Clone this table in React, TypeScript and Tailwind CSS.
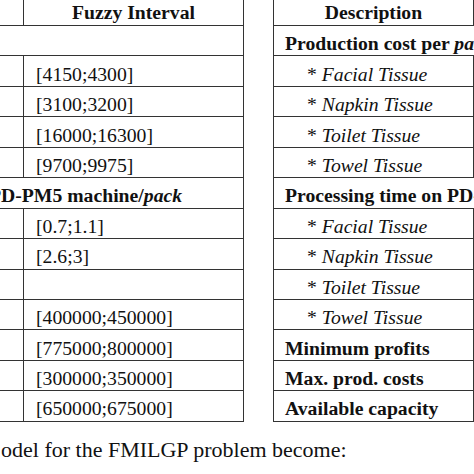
import React from 'react'

type Row =
  | { kind: 'head'; desc: string; value: string }
  | { kind: 'group'; text: string; italicTail: string }
  | { kind: 'item'; desc: string; value: string; plain?: boolean }

const leftRows: Row[] = [
  { kind: 'head', desc: 'Description', value: 'Fuzzy Interval' },
  { kind: 'group', text: 'Sales price per ', italicTail: 'pack' },
  { kind: 'item', desc: 'Facial Tissue', value: '[4150;4300]' },
  { kind: 'item', desc: 'Napkin Tissue', value: '[3100;3200]' },
  { kind: 'item', desc: 'Toilet Tissue', value: '[16000;16300]' },
  { kind: 'item', desc: 'Towel Tissue', value: '[9700;9975]' },
  { kind: 'group', text: 'Processing time on PD-PM5 machine/', italicTail: 'pack' },
  { kind: 'item', desc: 'Facial Tissue', value: '[0.7;1.1]' },
  { kind: 'item', desc: 'Napkin Tissue', value: '[2.6;3]' },
  { kind: 'item', desc: 'Toilet Tissue', value: '' },
  { kind: 'item', desc: 'Towel Tissue', value: '[400000;450000]' },
  { kind: 'item', desc: 'Minimum profits', value: '[775000;800000]', plain: true },
  { kind: 'item', desc: 'Max. prod. costs', value: '[300000;350000]', plain: true },
  { kind: 'item', desc: 'Available capacity', value: '[650000;675000]', plain: true },
]

const rightRows: Row[] = [
  { kind: 'head', desc: 'Description', value: 'Fuzzy Interval' },
  { kind: 'group', text: 'Production cost per ', italicTail: 'pack' },
  { kind: 'item', desc: 'Facial Tissue', value: '[2100;2200]' },
  { kind: 'item', desc: 'Napkin Tissue', value: '[1500;1600]' },
  { kind: 'item', desc: 'Toilet Tissue', value: '[8000;8200]' },
  { kind: 'item', desc: 'Towel Tissue', value: '[4800;4900]' },
  { kind: 'group', text: 'Processing time on PD-PM5 machine/', italicTail: 'pack' },
  { kind: 'item', desc: 'Facial Tissue', value: '[0.5;0.7]' },
  { kind: 'item', desc: 'Napkin Tissue', value: '[0.4;0.6]' },
  { kind: 'item', desc: 'Toilet Tissue', value: '[2.5;2.8]' },
  { kind: 'item', desc: 'Towel Tissue', value: '[1.2;1.5]' },
  { kind: 'item', desc: 'Minimum profits', value: '', plain: true },
  { kind: 'item', desc: 'Max. prod. costs', value: '', plain: true },
  { kind: 'item', desc: 'Available capacity', value: '', plain: true },
]

function TableRow({ row, descWidth }: { row: Row; descWidth: string }) {
  if (row.kind === 'group') {
    return (
      <div className="flex h-[30.45px] items-end border-b border-[#333] pb-[1.5px] pl-[11px] font-bold whitespace-nowrap">
        <span>
          {row.text}
          <i>{row.italicTail}</i>
        </span>
      </div>
    )
  }

  if (row.kind === 'head') {
    return (
      <div className="flex h-[31px] border-b border-[#333] font-bold">
        <div className={`${descWidth} flex shrink-0 items-end justify-center border-r border-[#333] pb-[2px]`}>
          {row.desc}
        </div>
        <div className="flex flex-1 items-end justify-center pb-[2px] whitespace-nowrap">{row.value}</div>
      </div>
    )
  }

  return (
    <div className="flex h-[30.45px] border-b border-[#333]">
      <div
        className={`${descWidth} flex shrink-0 items-end border-r border-[#333] pb-[1.5px] whitespace-nowrap ${
          row.plain ? 'pl-[11px] font-bold' : 'pl-[33px]'
        }`}
      >
        {row.plain ? row.desc : (
          <span>
            * <i>{row.desc}</i>
          </span>
        )}
      </div>
      <div className="flex flex-1 items-end pb-[1.5px] pl-[12px] whitespace-nowrap">{row.value}</div>
    </div>
  )
}

export default function App() {
  return (
    <div className="h-[474px] w-[474px] overflow-hidden bg-white font-['Liberation_Serif','Times_New_Roman',serif] text-[19.7px] leading-none text-[#111]">
      <div className="-mt-[6px] flex">
        {/* left table, its description column runs off the left edge */}
        <div className="-ml-[185px] w-[429px] shrink-0 border-x border-t border-[#333]">
          {leftRows.map((row, i) => (
            <TableRow key={i} row={row} descWidth="w-[208px]" />
          ))}
        </div>

        {/* right table, its value column runs off the right edge */}
        <div className="ml-[29px] w-[421px] shrink-0 border-x border-t border-[#333]">
          {rightRows.map((row, i) => (
            <TableRow key={i} row={row} descWidth="w-[200px]" />
          ))}
        </div>
      </div>

      <p className="mt-[17px] pl-[1px] text-[22px] leading-none whitespace-nowrap">
        odel for the FMILGP problem become:
      </p>
    </div>
  )
}
